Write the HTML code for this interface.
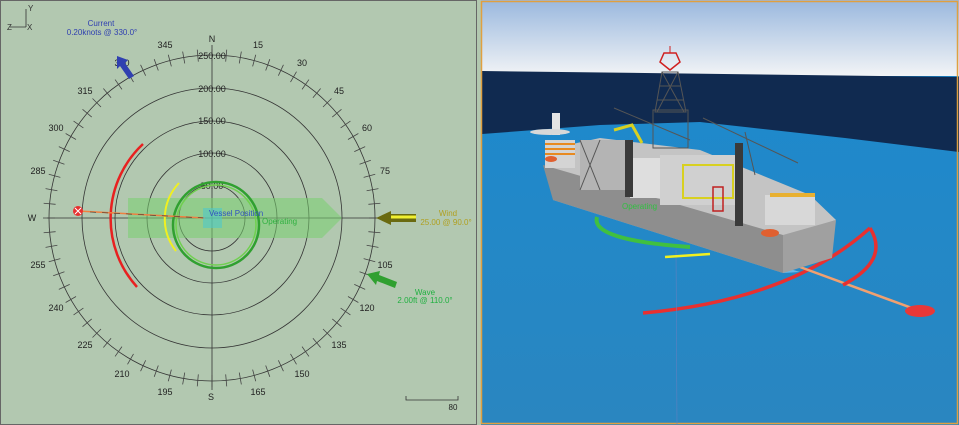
<!DOCTYPE html>
<html><head><meta charset="utf-8"><style>
html,body{margin:0;padding:0;width:959px;height:425px;overflow:hidden;background:#b2c8b0;font-family:"Liberation Sans",sans-serif}
svg{display:block}
</style></head><body>
<svg width="959" height="425" viewBox="0 0 959 425" xmlns="http://www.w3.org/2000/svg" font-family="Liberation Sans, sans-serif">
<defs>
<linearGradient id="sky" x1="0" y1="0" x2="0" y2="1"><stop offset="0" stop-color="#9ab8de"/><stop offset="1" stop-color="#f2f4f6"/></linearGradient>
<linearGradient id="sea" x1="0" y1="0" x2="0" y2="1"><stop offset="0" stop-color="#1a8ad0"/><stop offset="1" stop-color="#2a86c0"/></linearGradient>
<line id="tk" x1="212" y1="49" x2="212" y2="61" stroke="#444" stroke-width="0.8"/>
</defs>
<rect x="0" y="0" width="478" height="425" fill="#b2c8b0"/>
<rect x="0.5" y="0.5" width="476" height="424" fill="none" stroke="#666" stroke-width="1"/>
<g stroke="#333" stroke-width="0.8" fill="none"><path d="M26 27 V9 M26 27 H10"/></g>
<text x="28" y="11" font-size="8" fill="#333">Y</text><text x="7" y="30" font-size="8" fill="#333">Z</text><text x="27" y="30" font-size="8" fill="#333">X</text>
<g fill="none" stroke="#333" stroke-width="0.8">
<circle cx="212" cy="218" r="163"/><circle cx="212" cy="218" r="130"/><circle cx="212" cy="218" r="97"/><circle cx="212" cy="218" r="65"/><circle cx="212" cy="218" r="33"/>
<line x1="212" y1="45" x2="212" y2="390"/><line x1="47" y1="218" x2="377" y2="218"/>
</g>
<g>
<use href="#tk"/><use href="#tk" transform="rotate(5 212 218)"/><use href="#tk" transform="rotate(10 212 218)"/><use href="#tk" transform="rotate(15 212 218)"/><use href="#tk" transform="rotate(20 212 218)"/><use href="#tk" transform="rotate(25 212 218)"/><use href="#tk" transform="rotate(30 212 218)"/><use href="#tk" transform="rotate(35 212 218)"/><use href="#tk" transform="rotate(40 212 218)"/><use href="#tk" transform="rotate(45 212 218)"/><use href="#tk" transform="rotate(50 212 218)"/><use href="#tk" transform="rotate(55 212 218)"/><use href="#tk" transform="rotate(60 212 218)"/><use href="#tk" transform="rotate(65 212 218)"/><use href="#tk" transform="rotate(70 212 218)"/><use href="#tk" transform="rotate(75 212 218)"/><use href="#tk" transform="rotate(80 212 218)"/><use href="#tk" transform="rotate(85 212 218)"/><use href="#tk" transform="rotate(90 212 218)"/><use href="#tk" transform="rotate(95 212 218)"/><use href="#tk" transform="rotate(100 212 218)"/><use href="#tk" transform="rotate(105 212 218)"/><use href="#tk" transform="rotate(110 212 218)"/><use href="#tk" transform="rotate(115 212 218)"/><use href="#tk" transform="rotate(120 212 218)"/><use href="#tk" transform="rotate(125 212 218)"/><use href="#tk" transform="rotate(130 212 218)"/><use href="#tk" transform="rotate(135 212 218)"/><use href="#tk" transform="rotate(140 212 218)"/><use href="#tk" transform="rotate(145 212 218)"/><use href="#tk" transform="rotate(150 212 218)"/><use href="#tk" transform="rotate(155 212 218)"/><use href="#tk" transform="rotate(160 212 218)"/><use href="#tk" transform="rotate(165 212 218)"/><use href="#tk" transform="rotate(170 212 218)"/><use href="#tk" transform="rotate(175 212 218)"/><use href="#tk" transform="rotate(180 212 218)"/><use href="#tk" transform="rotate(185 212 218)"/><use href="#tk" transform="rotate(190 212 218)"/><use href="#tk" transform="rotate(195 212 218)"/><use href="#tk" transform="rotate(200 212 218)"/><use href="#tk" transform="rotate(205 212 218)"/><use href="#tk" transform="rotate(210 212 218)"/><use href="#tk" transform="rotate(215 212 218)"/><use href="#tk" transform="rotate(220 212 218)"/><use href="#tk" transform="rotate(225 212 218)"/><use href="#tk" transform="rotate(230 212 218)"/><use href="#tk" transform="rotate(235 212 218)"/><use href="#tk" transform="rotate(240 212 218)"/><use href="#tk" transform="rotate(245 212 218)"/><use href="#tk" transform="rotate(250 212 218)"/><use href="#tk" transform="rotate(255 212 218)"/><use href="#tk" transform="rotate(260 212 218)"/><use href="#tk" transform="rotate(265 212 218)"/><use href="#tk" transform="rotate(270 212 218)"/><use href="#tk" transform="rotate(275 212 218)"/><use href="#tk" transform="rotate(280 212 218)"/><use href="#tk" transform="rotate(285 212 218)"/><use href="#tk" transform="rotate(290 212 218)"/><use href="#tk" transform="rotate(295 212 218)"/><use href="#tk" transform="rotate(300 212 218)"/><use href="#tk" transform="rotate(305 212 218)"/><use href="#tk" transform="rotate(310 212 218)"/><use href="#tk" transform="rotate(315 212 218)"/><use href="#tk" transform="rotate(320 212 218)"/><use href="#tk" transform="rotate(325 212 218)"/><use href="#tk" transform="rotate(330 212 218)"/><use href="#tk" transform="rotate(335 212 218)"/><use href="#tk" transform="rotate(340 212 218)"/><use href="#tk" transform="rotate(345 212 218)"/><use href="#tk" transform="rotate(350 212 218)"/><use href="#tk" transform="rotate(355 212 218)"/>
</g>
<g font-size="9" fill="#222" text-anchor="middle">
<text x="212" y="42">N</text><text x="211" y="400">S</text><text x="32" y="221">W</text>
<text x="258" y="48">15</text><text x="302" y="66">30</text><text x="339" y="94">45</text><text x="367" y="131">60</text><text x="385" y="174">75</text>
<text x="385" y="268">105</text><text x="367" y="311">120</text><text x="339" y="348">135</text><text x="302" y="377">150</text><text x="258" y="395">165</text>
<text x="165" y="395">195</text><text x="122" y="377">210</text><text x="85" y="348">225</text><text x="56" y="311">240</text><text x="38" y="268">255</text>
<text x="38" y="174">285</text><text x="56" y="131">300</text><text x="85" y="94">315</text><text x="122" y="66">330</text><text x="165" y="48">345</text>
<text x="212" y="59">250.00</text><text x="212" y="92">200.00</text><text x="212" y="124">150.00</text><text x="212" y="157">100.00</text><text x="212" y="189">50.00</text>
</g>
<polygon points="128,198 322,198 342,218 322,238 128,238" fill="#78d070" fill-opacity="0.55"/>
<path d="M143,144 A102 102 0 0 0 137,287" fill="none" stroke="#e82020" stroke-width="2.5"/>
<path d="M179,183 A52 52 0 0 0 176,251" fill="none" stroke="#f0f020" stroke-width="2"/>
<circle cx="216" cy="225" r="43" fill="none" stroke="#30a030" stroke-width="2.5"/>
<circle cx="216" cy="225" r="40" fill="none" stroke="#70d050" stroke-width="1.5"/>
<line x1="78" y1="211" x2="205" y2="218" stroke="#f08040" stroke-width="1.5"/>
<line x1="90" y1="212" x2="205" y2="218" stroke="#333" stroke-width="0.6" stroke-dasharray="6 6"/>
<circle cx="78" cy="211" r="5" fill="#e83030"/><path d="M75,208 l6,6 M81,208 l-6,6" stroke="#fff" stroke-width="1"/>
<rect x="203" y="208" width="19" height="20" fill="#50c8c8" fill-opacity="0.6"/>
<text x="209" y="216" font-size="8" fill="#3050c0">Vessel Position</text>
<text x="262" y="224" font-size="8" fill="#30b040">Operating</text>
<polygon points="117,56 128,60 125,63 134,76 129,79 120,66 117,69" fill="#3040b0"/>
<text x="101" y="26" font-size="8" fill="#3040b0" text-anchor="middle">Current</text>
<text x="102" y="35" font-size="8" fill="#3040b0" text-anchor="middle">0.20knots @ 330.0°</text>
<polygon points="376,218 391,211 391,214 416,214 416,222 391,222 391,225" fill="#6a6a10"/>
<rect x="391" y="215.5" width="25" height="3" fill="#f0f030"/>
<text x="448" y="216" font-size="8" fill="#b0a020" text-anchor="middle">Wind</text>
<text x="446" y="225" font-size="8" fill="#b0a020" text-anchor="middle">25.00 @ 90.0°</text>
<polygon points="367,274 380,271 379,275 397,282 395,288 377,281 376,285" fill="#30a030"/>
<text x="425" y="295" font-size="8" fill="#20b040" text-anchor="middle">Wave</text>
<text x="425" y="303" font-size="8" fill="#20b040" text-anchor="middle">2.00ft @ 110.0°</text>
<path d="M406,396 V400 H458 V396" fill="none" stroke="#333" stroke-width="0.8"/>
<text x="453" y="410" font-size="8" fill="#222" text-anchor="middle">80</text>
<rect x="477" y="0" width="4" height="425" fill="#b2c8b0"/>
<!-- right panel -->
<rect x="481" y="0" width="478" height="425" fill="url(#sea)"/>
<rect x="481" y="0" width="478" height="76" fill="url(#sky)"/>
<polygon points="482,71 959,77 959,152 845,138 700,122 600,125 482,134" fill="#102a50"/>
<rect x="481.5" y="1.5" width="476" height="422" fill="none" stroke="#e0a040" stroke-width="1.5"/>
<path d="M643,313 Q790,300 870,228" fill="none" stroke="#e83030" stroke-width="3.5"/>
<line x1="800" y1="267" x2="920" y2="311" stroke="#f0a070" stroke-width="2.5"/>
<ellipse cx="920" cy="311" rx="15" ry="6" fill="#e83838"/>
<line x1="676" y1="250" x2="677" y2="425" stroke="#6080c0" stroke-width="0.6"/>
<!-- ship -->
<polygon points="553,200 783,273 800,272 565,200" fill="#6ab8e8"/>
<polygon points="545,150 600,138 700,150 810,195 836,220 783,237 545,168" fill="#c4c4c4"/>
<polygon points="543,165 783,235 783,273 553,200" fill="#8e8e8e"/>
<polygon points="783,235 836,220 832,258 783,273" fill="#a0a0a0"/>
<rect x="545" y="140" width="30" height="28" fill="#d4d4d4"/>
<rect x="552" y="113" width="8" height="22" fill="#e4e4e4"/>
<ellipse cx="550" cy="132" rx="20" ry="3" fill="#d8d8d8"/>
<g fill="#e88a20"><rect x="545" y="143" width="30" height="2"/><rect x="545" y="148" width="30" height="2"/><rect x="545" y="153" width="30" height="2"/></g>
<ellipse cx="551" cy="159" rx="6" ry="3" fill="#e06030"/>
<rect x="580" y="140" width="45" height="50" fill="#b4b4b4"/>
<rect x="630" y="158" width="30" height="40" fill="#dedede"/>
<rect x="660" y="155" width="80" height="50" fill="#d0d0d0"/>
<rect x="765" y="195" width="50" height="30" fill="#d8d8d8"/>
<rect x="770" y="193" width="45" height="4" fill="#e8b030"/>
<ellipse cx="770" cy="233" rx="9" ry="4" fill="#e06030"/>
<rect x="625" y="140" width="8" height="57" fill="#3a3a3a"/>
<rect x="735" y="143" width="8" height="83" fill="#3a3a3a"/>
<rect x="683" y="165" width="50" height="33" fill="none" stroke="#d8d020" stroke-width="2"/>
<rect x="713" y="187" width="10" height="24" fill="none" stroke="#c02020" stroke-width="1.5"/>
<path d="M614,130 L632,125 L642,143" stroke="#d8d020" stroke-width="3" fill="none"/>
<g stroke="#555" stroke-width="1" fill="none">
<path d="M655,112 L662,72 L678,72 L686,112 Z M657,100 L684,100 M660,86 L681,86 M662,72 L684,112 M678,72 L657,112 M653,110 L688,110 L688,148 L653,148 Z"/>
<path d="M614,108 L690,140 M703,118 L798,163 M745,132 L755,175 M580,140 L600,190 M600,140 L580,190"/>
</g>
<path d="M664,53 L676,53 L680,62 L670,70 L660,62 Z" fill="none" stroke="#d02020" stroke-width="1.5"/>
<line x1="670" y1="46" x2="670" y2="53" stroke="#d02020"/>
<text x="622" y="209" font-size="8" fill="#30c040">Operating</text>
<path d="M597,217 Q590,240 690,247" fill="none" stroke="#40c040" stroke-width="4"/>
<path d="M665,257 L710,254" fill="none" stroke="#f0f020" stroke-width="2.5"/>
<path d="M870,228 Q890,260 843,285" fill="none" stroke="#e83030" stroke-width="3.5"/>
</svg>
</body></html>
